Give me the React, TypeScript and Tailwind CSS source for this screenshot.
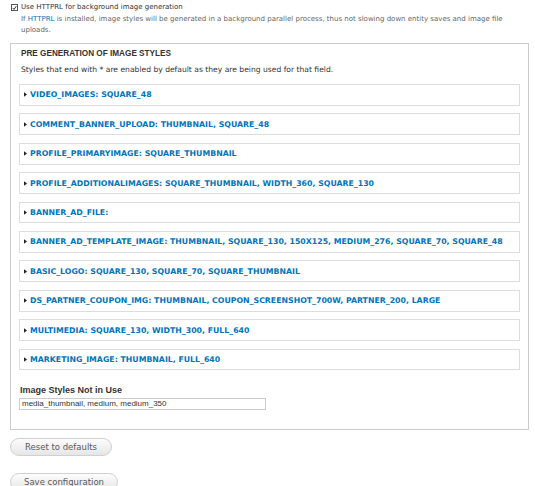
const rows = [
  "VIDEO_IMAGES: SQUARE_48",
  "COMMENT_BANNER_UPLOAD: THUMBNAIL, SQUARE_48",
  "PROFILE_PRIMARYIMAGE: SQUARE_THUMBNAIL",
  "PROFILE_ADDITIONALIMAGES: SQUARE_THUMBNAIL, WIDTH_360, SQUARE_130",
  "BANNER_AD_FILE:",
  "BANNER_AD_TEMPLATE_IMAGE: THUMBNAIL, SQUARE_130, 150X125, MEDIUM_276, SQUARE_70, SQUARE_48",
  "BASIC_LOGO: SQUARE_130, SQUARE_70, SQUARE_THUMBNAIL",
  "DS_PARTNER_COUPON_IMG: THUMBNAIL, COUPON_SCREENSHOT_700W, PARTNER_200, LARGE",
  "MULTIMEDIA: SQUARE_130, WIDTH_300, FULL_640",
  "MARKETING_IMAGE: THUMBNAIL, FULL_640",
];

export default function App() {
  return (
    <div className="w-[535px] h-[486px] overflow-hidden bg-white text-[#333] font-['DejaVu_Sans',Verdana,sans-serif]">
      {/* HTTPRL option */}
      <div className="pt-[2px] pl-[11px]">
        <div className="flex items-center h-[11px]">
          <span className="flex items-center justify-center w-[7px] h-[7px] border border-[#555] bg-white">
            <svg viewBox="0 0 7 7" className="w-[6px] h-[6px]">
              <path d="M1 3.5 L2.8 5.5 L6 1" fill="none" stroke="#222" strokeWidth="1.3" />
            </svg>
          </span>
          <label className="ml-[3px] text-[7px] leading-[11px]">Use HTTPRL for background image generation</label>
        </div>
        <p className="pl-[10px] w-[510px] mt-[1px] text-[7px] leading-[11px] text-[#666]">
          If <a className="text-[#0074bd]">HTTPRL</a> is installed, image styles will be generated in a background parallel process, thus not slowing down entity saves and image file uploads.
        </p>
      </div>

      {/* Pre generation fieldset */}
      <fieldset className="mt-[7px] ml-[10px] w-[519px] border border-[#ccc] px-[8px] pt-[4px] pb-[19px]">
        <div className="pl-[2px] text-[8.2px] leading-[11px] font-bold uppercase font-['Liberation_Sans',Arial,sans-serif]">
          Pre generation of image styles
        </div>
        <div className="pl-[2px] mt-[5px] text-[7.6px] leading-[11px]">
          Styles that end with * are enabled by default as they are being used for that field.
        </div>

        <div className="mt-[9px] flex flex-col gap-[7.6px]">
          {rows.map((r) => (
            <div key={r} className="h-[21.8px] border border-[#ddd] flex items-center pl-[4px]">
              <svg viewBox="0 0 4 6" className="w-[3px] h-[5px] mr-[3px] shrink-0">
                <path d="M0 0 L4 3 L0 6 Z" fill="#222" />
              </svg>
              <span className="text-[7.8px] leading-[11px] font-bold text-[#0074bd] whitespace-nowrap">{r}</span>
            </div>
          ))}
        </div>

        <div className="pl-[1px] mt-[15px] text-[9px] leading-[11px] font-bold font-['Liberation_Sans',Arial,sans-serif]">
          Image Styles Not in Use
        </div>
        <div className="mt-[2px] w-[247px] h-[12px] border border-[#ccc] flex items-center pl-[2px] text-[8px] text-[#333] font-['Liberation_Sans',Arial,sans-serif]">
          media_thumbnail, medium, medium_350
        </div>
      </fieldset>

      {/* Actions */}
      <div className="pl-[10px] flex flex-col items-start">
        <button className="mt-[8px] w-[102px] h-[18px] rounded-full border border-[#d0d0d0] bg-gradient-to-b from-[#fdfdfd] to-[#e6e6e6] text-[8.5px] text-[#5a5a5a] leading-none">
          Reset to defaults
        </button>
        <button className="mt-[17px] w-[108px] h-[18px] rounded-full border border-[#d0d0d0] bg-gradient-to-b from-[#fdfdfd] to-[#e6e6e6] text-[8.5px] text-[#5a5a5a] leading-none">
          Save configuration
        </button>
      </div>
    </div>
  );
}
